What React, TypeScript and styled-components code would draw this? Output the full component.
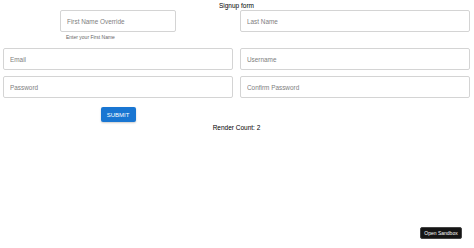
import styled, { createGlobalStyle } from "styled-components";

const GlobalStyle = createGlobalStyle`
  body {
    margin: 0;
    font-family: "Liberation Sans", Arial, sans-serif;
    background: #fff;
    color: #000;
  }
`;

function App() {
  return (
    <>
      <GlobalStyle />
      <Page>
        <Title>Signup form</Title>
        <Form>
          <Cell>
            <Field $narrow>
              <Input placeholder="First Name Override" />
              <Helper>Enter your First Name</Helper>
            </Field>
          </Cell>
          <Cell>
            <Input placeholder="Last Name" />
          </Cell>
          <Cell>
            <Input placeholder="Email" />
          </Cell>
          <Cell>
            <Input placeholder="Username" />
          </Cell>
          <Cell>
            <Input placeholder="Password" type="password" />
          </Cell>
          <Cell>
            <Input placeholder="Confirm Password" type="password" />
          </Cell>
          <Cell>
            <SubmitButton type="button">Submit</SubmitButton>
          </Cell>
        </Form>
        <RenderCount>Render Count: 2</RenderCount>
      </Page>
      <SandboxButton type="button">Open Sandbox</SandboxButton>
    </>
  );
}

const Page = styled.div`
  padding: 2px 4px 0 3px;
`;

const Title = styled.div`
  text-align: center;
  font-size: 6.5px;
  line-height: 8px;
`;

const Form = styled.div`
  display: grid;
  grid-template-columns: 1fr 1fr;
  column-gap: 7px;
  row-gap: 6px;
`;

const Cell = styled.div`
  display: flex;
  justify-content: center;
  align-items: flex-start;
  &:nth-child(-n + 2) {
    min-height: 32px;
  }
`;

const Field = styled.div<{ $narrow?: boolean }>`
  display: flex;
  flex-direction: column;
  width: ${(p) => (p.$narrow ? "116px" : "100%")};
`;

const Input = styled.input`
  box-sizing: border-box;
  width: 100%;
  height: 22px;
  margin: 0;
  padding: 0 6px;
  border: 1px solid #d4d4d4;
  border-radius: 2px;
  font-family: "Liberation Sans", Arial, sans-serif;
  font-size: 6.4px;
  color: #333;
  background: #fff;
  outline: none;

  &::placeholder {
    color: #808080;
  }
`;

const Helper = styled.span`
  margin: 2px 0 0 6px;
  font-size: 5px;
  line-height: 6px;
  color: #666;
`;

const SubmitButton = styled.button`
  margin-top: 3px;
  width: 35px;
  height: 15px;
  padding: 0;
  border: none;
  border-radius: 2px;
  background: #1976d2;
  color: #fff;
  font-family: "Liberation Sans", Arial, sans-serif;
  font-size: 6px;
  text-transform: uppercase;
  box-shadow: 0 1px 2px rgba(0, 0, 0, 0.2);
`;

const RenderCount = styled.div`
  margin-top: 2px;
  text-align: center;
  font-size: 6.5px;
  line-height: 8px;
`;

const SandboxButton = styled.button`
  position: fixed;
  right: 12px;
  bottom: 9px;
  width: 42px;
  height: 12px;
  padding: 0;
  border: 1px solid #444;
  border-radius: 2px;
  background: #151515;
  color: #fff;
  font-family: "Liberation Sans", Arial, sans-serif;
  font-size: 5px;
`;

export default App;
